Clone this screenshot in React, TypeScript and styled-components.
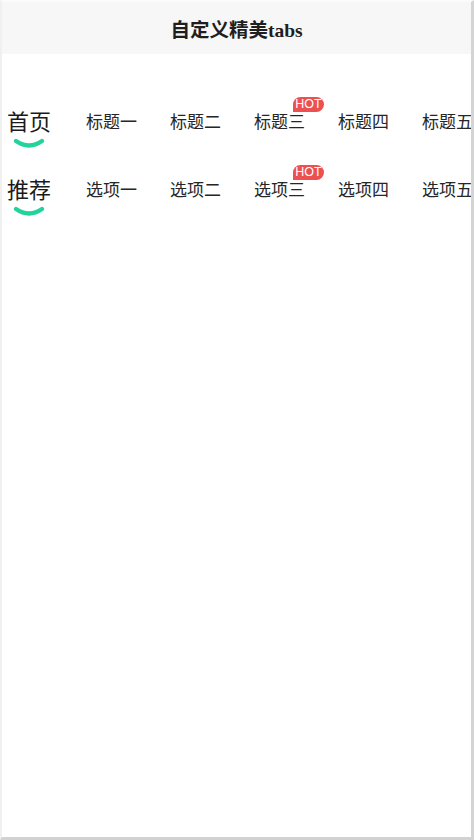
import React from "react";
import styled, { createGlobalStyle } from "styled-components";

const Global = createGlobalStyle`
  html, body { margin: 0; padding: 0; background: #ffffff; }
  body { font-family: "Liberation Serif", "Noto Sans CJK SC", serif; }
`;

const Frame = styled.div`
  box-sizing: border-box;
  width: 474px;
  height: 840px;
  overflow: hidden;
  background: #ffffff;
  border-top: 2px solid #fbfbfb;
  border-left: 2px solid #f0f0f0;
  border-right: 3px solid #d4d4d4;
  border-bottom: 3px solid #d2d2d2;
`;

const Header = styled.header`
  height: 52px;
  background: #f7f7f7;
  display: flex;
  align-items: center;
  justify-content: center;
  font-size: 19.5px;
  font-weight: 700;
  color: #1f1f1f;
`;

const Tabs = styled.div`
  padding-top: 34px;
  display: flex;
  flex-direction: column;
`;

const Row = styled.div`
  height: 68px;
  box-sizing: border-box;
  padding: 20px 0 0 5px;
  display: flex;
  align-items: flex-start;
  white-space: nowrap;
`;

const Tab = styled.div<{ $active?: boolean }>`
  flex: none;
  position: relative;
  display: flex;
  flex-direction: column;
  align-items: center;
  margin-right: ${(p) => (p.$active ? "35px" : "33px")};
`;

const Label = styled.span<{ $active?: boolean }>`
  position: relative;
  display: block;
  height: 30px;
  line-height: 30px;
  font-size: ${(p) => (p.$active ? "22px" : "17px")};
  color: ${(p) => (p.$active ? "#1a1a1a" : "#262626")};
`;

const Hot = styled.span`
  position: absolute;
  top: -11px;
  right: -19px;
  width: 31px;
  height: 15px;
  background: #ec5050;
  color: #ffffff;
  border-radius: 8px 8px 8px 0;
  font-family: "Liberation Sans", Arial, sans-serif;
  font-size: 12.5px;
  line-height: 15px;
  text-align: center;
`;

const Smile = () => (
  <svg width="32" height="10" viewBox="0 0 32 10" aria-hidden="true">
    <path
      d="M3 3 Q16 12 29 3"
      fill="none"
      stroke="#22d39c"
      strokeWidth="4.2"
      strokeLinecap="round"
    />
  </svg>
);

const rows = [
  { first: "首页", items: ["标题一", "标题二", "标题三", "标题四", "标题五"] },
  { first: "推荐", items: ["选项一", "选项二", "选项三", "选项四", "选项五"] },
];

export default function App() {
  return (
    <>
      <Global />
      <Frame>
        <Header>自定义精美tabs</Header>
        <Tabs>
          {rows.map((r) => (
            <Row key={r.first}>
              <Tab $active>
                <Label $active>{r.first}</Label>
                <Smile />
              </Tab>
              {r.items.map((t, i) => (
                <Tab key={t}>
                  <Label>
                    {t}
                    {i === 2 && <Hot>HOT</Hot>}
                  </Label>
                </Tab>
              ))}
            </Row>
          ))}
        </Tabs>
      </Frame>
    </>
  );
}
